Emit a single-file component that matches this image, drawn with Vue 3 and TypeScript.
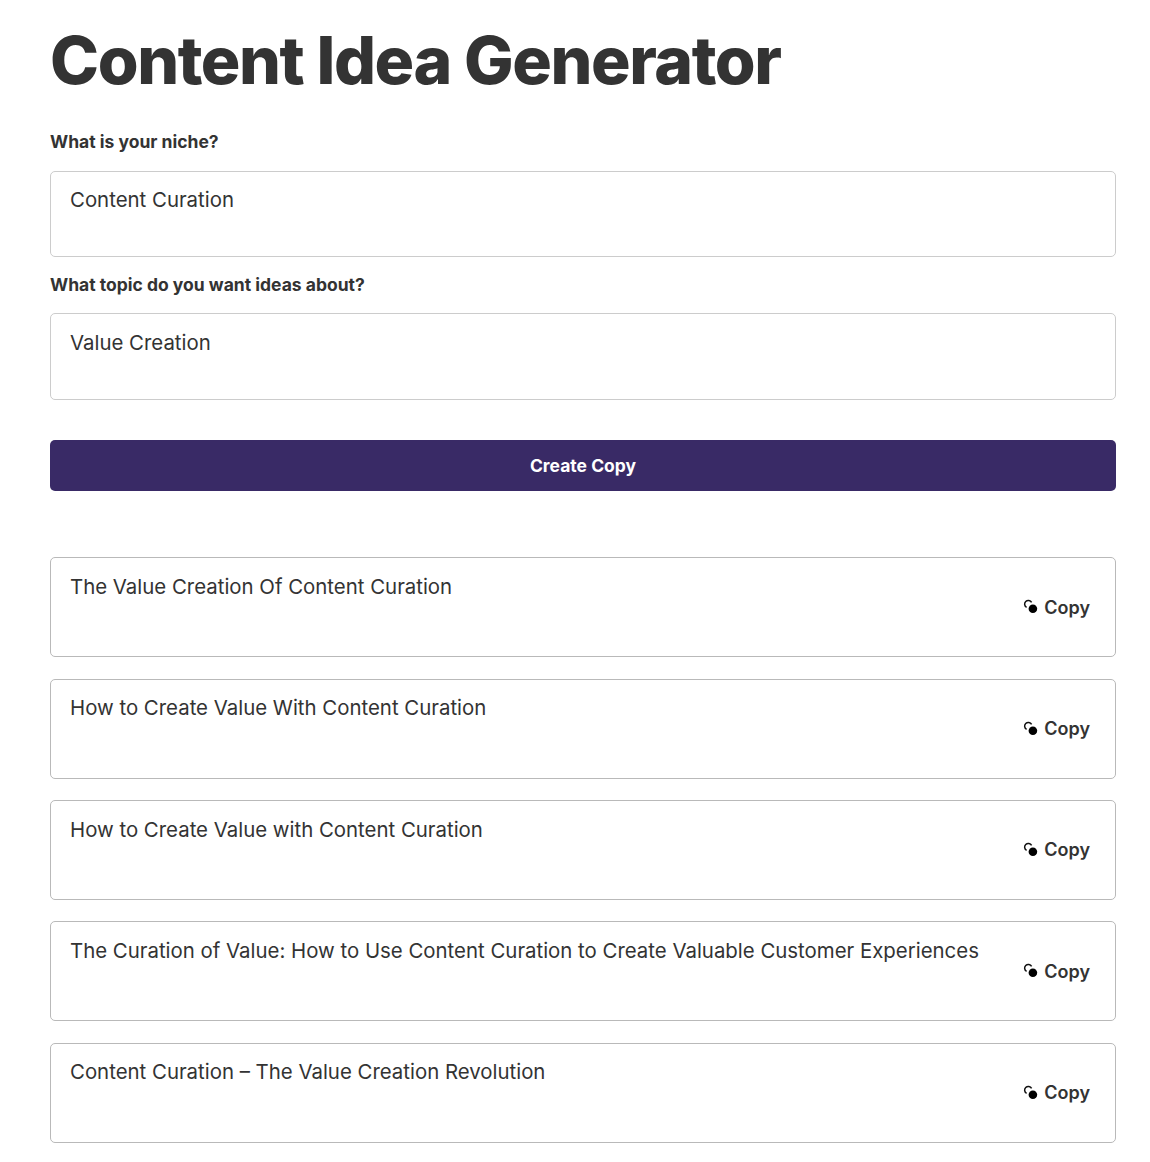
<script setup lang="ts">
const results: string[] = [
  'The Value Creation Of Content Curation',
  'How to Create Value With Content Curation',
  'How to Create Value with Content Curation',
  'The Curation of Value: How to Use Content Curation to Create Valuable Customer Experiences',
  'Content Curation – The Value Creation Revolution',
]
</script>

<template>
  <main class="page">
    <h1 class="title">Content Idea Generator</h1>
    <label class="label first">What is your niche?</label>
    <div class="input">Content Curation</div>
    <label class="label second">What topic do you want ideas about?</label>
    <div class="input">Value Creation</div>
    <button class="cta" type="button">Create Copy</button>
    <section class="results">
      <article v-for="r in results" :key="r" class="result">
        <p class="result-text">{{ r }}</p>
        <span class="copy">
          <svg class="copy-icon" width="16" height="16" viewBox="0 0 16 16" aria-hidden="true">
            <path d="M8.6 3.4A3.7 3.7 0 1 0 3.6 8.4" fill="none" stroke="#111" stroke-width="1.5" />
            <circle cx="9.9" cy="9.7" r="4.3" fill="#000" />
          </svg>
          Copy
        </span>
      </article>
    </section>
  </main>
</template>

<style>
html, body { margin: 0; background: #fff; }
</style>

<style scoped>
.page {
  box-sizing: border-box;
  width: 1150px;
  height: 1162px;
  overflow: hidden;
  padding: 0 34px 0 50px;
  font-family: "Inter", "Liberation Sans", sans-serif;
  color: #333;
}
.title {
  margin: 0;
  padding-top: 21px;
  font-size: 66px;
  line-height: 79px;
  font-weight: 800;
  letter-spacing: -1.4px;
  color: #333;
}
.label {
  display: block;
  font-size: 17.5px;
  line-height: 22px;
  font-weight: 700;
}
.label.first { margin-top: 30.5px; margin-bottom: 18.2px; }
.label.second { margin-top: 16.5px; margin-bottom: 17.5px; }
.input {
  box-sizing: border-box;
  height: 86.5px;
  padding: 14.4px 19px;
  border: 1px solid #ccc;
  border-radius: 5px;
  font-size: 20.4px;
  line-height: 28px;
}
.cta {
  display: block;
  box-sizing: border-box;
  width: 100%;
  height: 51px;
  margin-top: 40.3px;
  border: 0;
  border-radius: 5px;
  background: #392a66;
  color: #fff;
  font-family: inherit;
  font-size: 17.5px;
  font-weight: 700;
}
.results {
  display: flex;
  flex-direction: column;
  gap: 21.4px;
  margin-top: 66.2px;
}
.result {
  box-sizing: border-box;
  height: 100px;
  display: flex;
  justify-content: space-between;
  align-items: center;
  padding: 0 25px 0 19px;
  border: 1px solid #b9b9b9;
  border-radius: 5px;
}
.result-text {
  align-self: flex-start;
  margin: 14.55px 0 0;
  font-size: 20.4px;
  line-height: 28px;
}
.copy {
  display: flex;
  align-items: center;
  gap: 5px;
  font-size: 18px;
  font-weight: 600;
}
.copy-icon { flex: none; }
</style>
